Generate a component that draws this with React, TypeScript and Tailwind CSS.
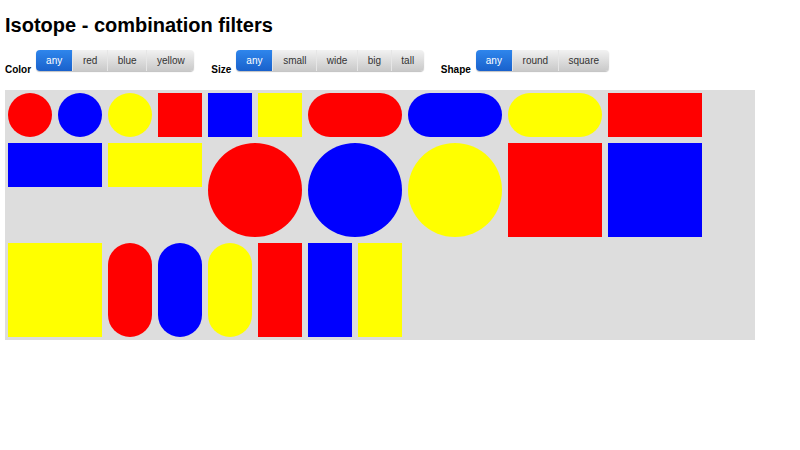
import React from 'react'

type Item = { color: 'red' | 'blue' | 'yellow'; size: 'small' | 'wide' | 'big' | 'tall'; shape: 'round' | 'square' }

const colorClass = {
  red: 'bg-[#ff0000]',
  blue: 'bg-[#0000ff]',
  yellow: 'bg-[#ffff00]',
}

const sizeClass = {
  small: 'w-[44px] h-[44px]',
  wide: 'w-[94px] h-[44px]',
  big: 'w-[94px] h-[94px]',
  tall: 'w-[44px] h-[94px]',
}

const colors: Item['color'][] = ['red', 'blue', 'yellow']
const sizes: Item['size'][] = ['small', 'wide', 'big', 'tall']
const shapes: Item['shape'][] = ['round', 'square']

const items: Item[] = []
sizes.forEach((size) =>
  shapes.forEach((shape) => colors.forEach((color) => items.push({ color, size, shape })))
)

function ButtonGroup({ label, options }: { label: string; options: string[] }) {
  return (
    <div className="flex items-start gap-[5px]">
      <span className="mt-[14px] text-[10px] leading-[12px] font-bold text-black">{label}</span>
      <div className="flex rounded-[4px] overflow-hidden shadow-[0_1px_1px_rgba(0,0,0,0.25)]">
        {options.map((opt, i) => (
          <button
            key={opt}
            className={
              i === 0
                ? 'h-[21px] px-[10px] text-[10px] leading-[21px] text-white bg-gradient-to-b from-[#2f86ec] to-[#1961cc]'
                : 'h-[21px] px-[9.66px] text-[10px] leading-[21px] text-[#333] border-l border-[#e6e6e6] bg-gradient-to-b from-[#f2f2f2] to-[#c9c9c9]'
            }
          >
            {opt}
          </button>
        ))}
      </div>
    </div>
  )
}

export default function App() {
  return (
    <div className="px-[5px] bg-white min-h-[450px] font-['Liberation_Sans',Arial,sans-serif]">
      <h1 className="pt-[13px] text-[20px] leading-[24px] font-bold text-black">Isotope - combination filters</h1>

      <div className="mt-[13px] flex gap-[17px]">
        <ButtonGroup label="Color" options={['any', 'red', 'blue', 'yellow']} />
        <ButtonGroup label="Size" options={['any', 'small', 'wide', 'big', 'tall']} />
        <ButtonGroup label="Shape" options={['any', 'round', 'square']} />
      </div>

      <div className="mt-[14px] w-[750px] bg-[#dddddd] flex flex-wrap items-start">
        {items.map((it, i) => (
          <div
            key={i}
            className={`m-[3px] ${sizeClass[it.size]} ${colorClass[it.color]} ${it.shape === 'round' ? 'rounded-full' : ''}`}
          />
        ))}
      </div>
    </div>
  )
}
